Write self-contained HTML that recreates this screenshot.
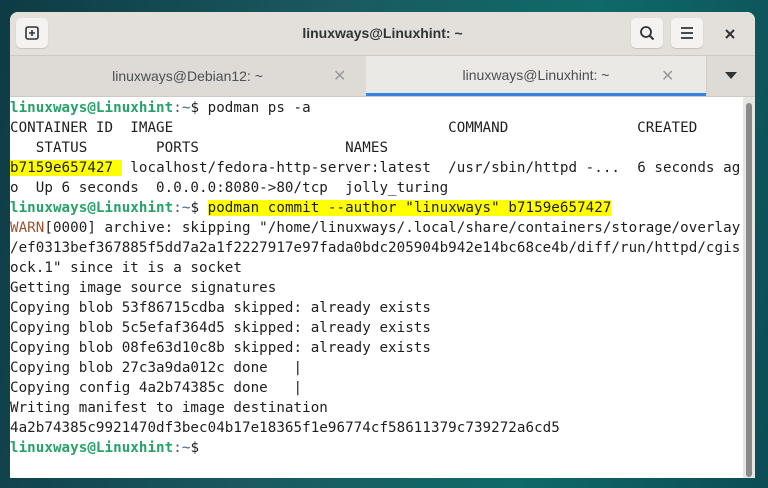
<!DOCTYPE html>
<html><head><style>
html,body{margin:0;padding:0;width:768px;height:488px;overflow:hidden;background:linear-gradient(100deg,#0e3b45 0%,#1a5a60 40%,#0f6a68 70%,#0c4d55 100%);font-family:"Liberation Sans","DejaVu Sans",sans-serif;}
.win{position:absolute;left:10px;top:12px;width:745px;height:466px;background:#fff;border-radius:8px 8px 0 0;overflow:hidden;}
.hdr{position:absolute;left:0;top:0;width:745px;height:43px;background:#e3e0dc;border-bottom:1px solid #cdc9c4;}
.btn{position:absolute;top:6px;width:32px;height:30px;background:#f4f3f1;border-radius:5px;box-shadow:0 1px 1px rgba(0,0,0,.15);}
.title{position:absolute;left:0;width:745px;top:13px;text-align:center;font-size:14px;font-weight:bold;color:#2e3436;}
.tabs{position:absolute;left:0;top:44px;width:745px;height:40px;background:#dedbd7;border-bottom:1px solid #cdc9c4;}
.tab{position:absolute;top:0;height:40px;font-size:14px;color:#4a4f52;line-height:40px;text-align:center;}
.x{position:absolute;top:0;color:#9a9a9a;font-size:16px;}
.term{position:absolute;left:0;top:85px;padding-top:1px;width:733px;height:380px;background:#fff;font-family:"DejaVu Sans Mono","Liberation Mono",monospace;font-size:14.2px;letter-spacing:0.05px;line-height:20px;color:#1e1e1e;}
.l{height:20px;white-space:pre}
.g{color:#26a269;font-weight:bold}.b{color:#3465a4}.c{color:#555}
.hl{background:#ffff00}
.w{color:#a0522d}
.sb{position:absolute;left:733px;top:85px;width:12px;height:381px;background:#e8e6e3;}
.th{position:absolute;left:3px;top:6px;width:6px;height:374px;border-radius:3px;background:#8a8a8a;}
</style></head><body>
<div class="win">
 <div class="hdr">
  <div class="btn" style="left:6px"><svg width="32" height="30"><rect x="10" y="9" width="12" height="12" rx="2" fill="none" stroke="#2e3436" stroke-width="1.6"/><path d="M16 12v6M13 15h6" stroke="#2e3436" stroke-width="1.6"/></svg></div>
  <div class="title">linuxways@Linuxhint: ~</div>
  <div class="btn" style="left:621px"><svg width="32" height="30"><circle cx="15" cy="14" r="5" fill="none" stroke="#2e3436" stroke-width="1.8"/><path d="M18.5 17.5l4 4" stroke="#2e3436" stroke-width="2"/></svg></div>
  <div class="btn" style="left:661px"><svg width="32" height="30"><path d="M10 10h12M10 15h12M10 20h12" stroke="#2e3436" stroke-width="1.8"/></svg></div>
  <svg style="position:absolute;left:714px;top:16px" width="12" height="12"><path d="M2 2l8 8M10 2l-8 8" stroke="#2e3436" stroke-width="2"/></svg>
 </div>
 <div class="tabs">
  <div class="tab" style="left:0;width:355px">linuxways@Debian12: ~</div>
  <div class="x" style="left:323px;top:10px">✕</div>
  <div class="tab" style="left:356px;width:340px;background:#ebe9e6;border-bottom:3px solid #3584e4;height:37px;line-height:38px">linuxways@Linuxhint: ~</div>
  <div class="x" style="left:651px;top:10px">✕</div>
  <div style="position:absolute;left:696px;top:0;width:49px;height:40px;background:#dedbd7;border-left:1px solid #cfcbc6"></div>
  <svg style="position:absolute;left:715px;top:16px" width="12" height="8"><path d="M0 0h12L6 7z" fill="#2e3436"/></svg>
 </div>
 <div class="term">
<div class="l"><span class="g">linuxways@Linuxhint</span><span class="c">:</span><span class="b">~</span>$ podman ps -a</div>
<div class="l">CONTAINER ID  IMAGE                                COMMAND               CREATED</div>
<div class="l">   STATUS        PORTS                 NAMES</div>
<div class="l"><span class="hl">b7159e657427 </span> localhost/fedora-http-server:latest  /usr/sbin/httpd -...  6 seconds ag</div>
<div class="l">o  Up 6 seconds  0.0.0.0:8080-&gt;80/tcp  jolly_turing</div>
<div class="l"><span class="g">linuxways@Linuxhint</span><span class="c">:</span><span class="b">~</span>$ <span class="hl">podman commit --author "linuxways" b7159e657427</span></div>
<div class="l"><span class="w">WARN</span>[0000] archive: skipping "/home/linuxways/.local/share/containers/storage/overlay</div>
<div class="l">/ef0313bef367885f5dd7a2a1f2227917e97fada0bdc205904b942e14bc68ce4b/diff/run/httpd/cgis</div>
<div class="l">ock.1" since it is a socket</div>
<div class="l">Getting image source signatures</div>
<div class="l">Copying blob 53f86715cdba skipped: already exists</div>
<div class="l">Copying blob 5c5efaf364d5 skipped: already exists</div>
<div class="l">Copying blob 08fe63d10c8b skipped: already exists</div>
<div class="l">Copying blob 27c3a9da012c done   |</div>
<div class="l">Copying config 4a2b74385c done   |</div>
<div class="l">Writing manifest to image destination</div>
<div class="l">4a2b74385c9921470df3bec04b17e18365f1e96774cf58611379c739272a6cd5</div>
<div class="l"><span class="g">linuxways@Linuxhint</span><span class="c">:</span><span class="b">~</span>$</div>
 </div>
 <div class="sb"><div class="th"></div></div>
</div>
</body></html>
